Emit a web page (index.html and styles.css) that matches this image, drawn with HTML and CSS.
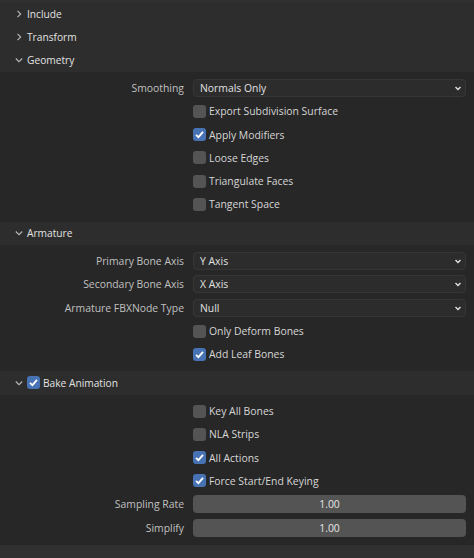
FILE: index.html
```html
<!DOCTYPE HTML>
<html>
<head>
    <title>FBX Export</title>
    <link rel="stylesheet" href="styles.css">
</head>
<body>
    <div class="panel">
        <div class="head"><svg class="chev" viewBox="0 0 8 8"><path d="M2.5 0.8 L5.7 4 L2.5 7.2"/></svg>Include</div>
        <div class="head"><svg class="chev" viewBox="0 0 8 8"><path d="M2.5 0.8 L5.7 4 L2.5 7.2"/></svg>Transform</div>

        <div class="head"><svg class="chev" viewBox="0 0 8 8"><path d="M0.8 2.5 L4 5.7 L7.2 2.5"/></svg>Geometry</div>
        <div class="body">
            <div class="row">
                <span class="lbl">Smoothing</span>
                <div class="select">Normals Only<svg class="arrow" viewBox="0 0 8 8"><path d="M1.5 3 L4 5.5 L6.5 3"/></svg></div>
            </div>
            <div class="row"><span class="lbl"></span><span class="check"></span>Export Subdivision Surface</div>
            <div class="row"><span class="lbl"></span><span class="check on"><svg viewBox="0 0 13 13"><path d="M3 6.8 L5.4 9.2 L10 3.8"/></svg></span>Apply Modifiers</div>
            <div class="row"><span class="lbl"></span><span class="check"></span>Loose Edges</div>
            <div class="row"><span class="lbl"></span><span class="check"></span>Triangulate Faces</div>
            <div class="row"><span class="lbl"></span><span class="check"></span>Tangent Space</div>
        </div>

        <div class="head"><svg class="chev" viewBox="0 0 8 8"><path d="M0.8 2.5 L4 5.7 L7.2 2.5"/></svg>Armature</div>
        <div class="body">
            <div class="row">
                <span class="lbl">Primary Bone Axis</span>
                <div class="select">Y Axis<svg class="arrow" viewBox="0 0 8 8"><path d="M1.5 3 L4 5.5 L6.5 3"/></svg></div>
            </div>
            <div class="row">
                <span class="lbl">Secondary Bone Axis</span>
                <div class="select">X Axis<svg class="arrow" viewBox="0 0 8 8"><path d="M1.5 3 L4 5.5 L6.5 3"/></svg></div>
            </div>
            <div class="row">
                <span class="lbl">Armature FBXNode Type</span>
                <div class="select">Null<svg class="arrow" viewBox="0 0 8 8"><path d="M1.5 3 L4 5.5 L6.5 3"/></svg></div>
            </div>
            <div class="row"><span class="lbl"></span><span class="check"></span>Only Deform Bones</div>
            <div class="row"><span class="lbl"></span><span class="check on"><svg viewBox="0 0 13 13"><path d="M3 6.8 L5.4 9.2 L10 3.8"/></svg></span>Add Leaf Bones</div>
        </div>

        <div class="head"><svg class="chev" viewBox="0 0 8 8"><path d="M0.8 2.5 L4 5.7 L7.2 2.5"/></svg><span class="check on"><svg viewBox="0 0 13 13"><path d="M3 6.8 L5.4 9.2 L10 3.8"/></svg></span>Bake Animation</div>
        <div class="body">
            <div class="row"><span class="lbl"></span><span class="check"></span>Key All Bones</div>
            <div class="row"><span class="lbl"></span><span class="check"></span>NLA Strips</div>
            <div class="row"><span class="lbl"></span><span class="check on"><svg viewBox="0 0 13 13"><path d="M3 6.8 L5.4 9.2 L10 3.8"/></svg></span>All Actions</div>
            <div class="row"><span class="lbl"></span><span class="check on"><svg viewBox="0 0 13 13"><path d="M3 6.8 L5.4 9.2 L10 3.8"/></svg></span>Force Start/End Keying</div>
            <div class="row">
                <span class="lbl">Sampling Rate</span>
                <div class="num">1.00</div>
            </div>
            <div class="row">
                <span class="lbl">Simplify</span>
                <div class="num">1.00</div>
            </div>
        </div>
    </div>
</body>
</html>
```

FILE: styles.css
```css
body {
    margin: 0;
    background-color: #303030;
    font-family: "Open Sans", sans-serif;
    font-size: 10.4px;
    color: #d6d6d6;
}

.panel {
    padding-top: 2px;
}

.head {
    height: 23.2px;
    display: flex;
    align-items: center;
    padding-left: 15px;
    background-color: #2d2d2d;
    color: #e2e2e2;
    font-size: 10.2px;
}

.chev {
    width: 8px;
    height: 8px;
    margin-right: 4px;
    fill: none;
    stroke: #b8b8b8;
    stroke-width: 1.1;
}

.head .check {
    margin-right: 3px;
}

.body {
    background-color: #272727;
    padding: 4.8px 0 5.4px 0;
}

.row {
    height: 23.3px;
    display: flex;
    align-items: center;
}

.lbl {
    width: 184px;
    padding-right: 9px;
    text-align: right;
    color: #c0c0c0;
    flex-shrink: 0;
}

.check {
    width: 13px;
    height: 13px;
    border-radius: 3px;
    background-color: #545454;
    margin-right: 3px;
    flex-shrink: 0;
}

.check.on {
    background-color: #4772b3;
}

.check svg {
    display: block;
    width: 13px;
    height: 13px;
    fill: none;
    stroke: #ffffff;
    stroke-width: 1.8;
}

.select {
    flex: 1;
    margin-right: 8px;
    height: 18px;
    box-sizing: border-box;
    border: 1px solid #363636;
    border-radius: 4px;
    background-color: #2c2c2c;
    display: flex;
    align-items: center;
    padding-left: 6px;
    color: #e0e0e0;
}

.arrow {
    margin-left: auto;
    margin-right: 3px;
    width: 8px;
    height: 8px;
    fill: none;
    stroke: #e0e0e0;
    stroke-width: 1.4;
}

.num {
    flex: 1;
    margin-right: 8px;
    height: 18px;
    border-radius: 4px;
    background-color: #545454;
    color: #e6e6e6;
    display: flex;
    align-items: center;
    justify-content: center;
}
```
